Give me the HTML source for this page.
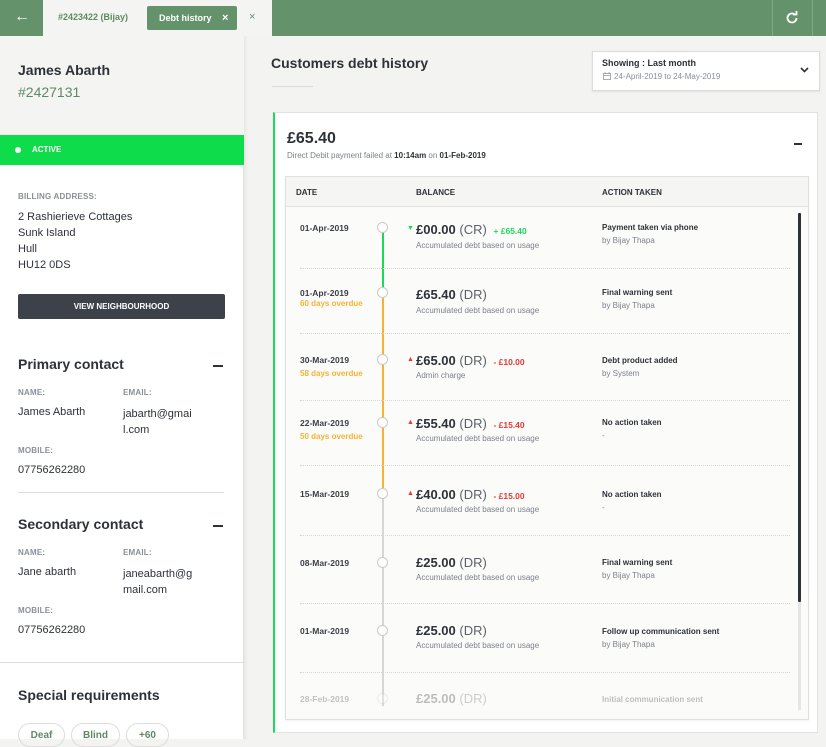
<!DOCTYPE html>
<html><head><meta charset="utf-8"><style>
*{box-sizing:border-box;margin:0;padding:0}
body{width:826px;height:739px;overflow:hidden;background:#f3f3f1;font-family:"Liberation Sans",sans-serif;color:#2d3138;position:relative}
.a{position:absolute;white-space:nowrap}
.lbl{font-size:8px;font-weight:bold;color:#8a8f98;letter-spacing:.2px}
.v{font-size:11px;color:#2d3138}
.h{font-size:14px;font-weight:bold;color:#2d3138}
.date{font-size:8.5px;font-weight:bold;color:#3a3e45}
.od{font-size:8px;color:#f5b335;font-weight:bold}
.amt{font-size:13px;font-weight:bold;color:#2d3138}
.amt span{font-weight:normal;color:#5c6169}
.sub{font-size:8px;color:#7c818a}
.act{font-size:8px;font-weight:bold;color:#2d3138}
.by{font-size:8px;color:#7c818a}
.dot{position:absolute;left:377px;width:11px;height:11px;border-radius:50%;border:1px solid #c9c9c9;background:#fff}
.div{position:absolute;left:300px;width:490px;border-top:1px dotted #d6d6d6}
.up{color:#e53935;font-size:7px}
.red{color:#e53935;font-size:8.5px;font-weight:bold}
</style></head><body>
<!-- top bar -->
<div class="a" style="left:0;top:0;width:826px;height:36px;background:#64926a"></div>
<div class="a" style="left:43px;top:0;width:229px;height:36px;background:#f4f4f2"></div>
<div class="a" style="left:14px;top:8px;color:#fff;font-size:16px">&#8592;</div>
<div class="a" style="left:58px;top:12px;font-size:9px;font-weight:bold;color:#5e8a63">#2423422 (Bijay)</div>
<div class="a" style="left:147px;top:6px;width:90px;height:24px;background:#64926a;border-radius:2px;color:#fff;font-size:9px;font-weight:bold;padding:6px 0 0 12px">Debt history <span style="margin-left:8px;font-size:11px">&#215;</span></div>
<div class="a" style="left:249px;top:11px;font-size:11px;color:#64926a">&#215;</div>
<div class="a" style="left:772px;top:0;width:1px;height:36px;background:#82a886"></div>
<div class="a" style="left:812px;top:0;width:1px;height:36px;background:#82a886"></div>
<svg class="a" style="left:785px;top:11px" width="14" height="14" viewBox="0 0 14 14"><path d="M11.5 7a4.5 4.5 0 1 1-1.4-3.3" fill="none" stroke="#fff" stroke-width="1.8"/><path d="M8 2.5h3.5V-1" fill="none" stroke="#fff" stroke-width="1.8" transform="translate(0,1)"/></svg>
<!-- sidebar -->
<div class="a" style="left:0;top:36px;width:244px;height:703px;background:#fff;border-right:1px solid #e2e2e0"></div>
<div class="a" style="left:0;top:36px;width:244px;height:99px;background:#f4f4f2"></div>
<div class="a" style="left:244px;top:36px;width:4px;height:703px;background:linear-gradient(90deg,#e6e6e4,#f3f3f1)"></div>
<div class="a" style="left:18px;top:62px;font-size:14px;font-weight:bold">James Abarth</div>
<div class="a" style="left:18px;top:84px;font-size:14px;color:#5e8a63">#2427131</div>
<div class="a" style="left:0;top:135px;width:244px;height:30px;background:#0fdc4b"></div>
<div class="a" style="left:15px;top:147px;width:6px;height:6px;border-radius:50%;background:#fff"></div>
<div class="a" style="left:32px;top:145px;font-size:8px;font-weight:bold;color:#fff">ACTIVE</div>
<div class="a lbl" style="left:18px;top:192px">BILLING ADDRESS:</div>
<div class="a v" style="left:18px;top:209px;line-height:16px">2 Rashierieve Cottages<br>Sunk Island<br>Hull<br>HU12 0DS</div>
<div class="a" style="left:18px;top:294px;width:207px;height:25px;background:#3c414a;border-radius:2px;color:#fff;font-size:8px;font-weight:bold;text-align:center;line-height:25px">VIEW NEIGHBOURHOOD</div>
<div class="a h" style="left:18px;top:356px">Primary contact</div>
<div class="a" style="left:213px;top:365px;width:10px;height:1.5px;background:#2d3138"></div>
<div class="a lbl" style="left:18px;top:388px">NAME:</div>
<div class="a lbl" style="left:123px;top:388px">EMAIL:</div>
<div class="a v" style="left:18px;top:406px">James Abarth</div>
<div class="a v" style="left:123px;top:406px;line-height:16px">jabarth@gmai<br>l.com</div>
<div class="a lbl" style="left:18px;top:446px">MOBILE:</div>
<div class="a v" style="left:18px;top:464px">07756262280</div>
<div class="a" style="left:18px;top:492px;width:206px;height:1px;background:#ddd"></div>
<div class="a h" style="left:18px;top:516px">Secondary contact</div>
<div class="a" style="left:213px;top:525px;width:10px;height:1.5px;background:#2d3138"></div>
<div class="a lbl" style="left:18px;top:548px">NAME:</div>
<div class="a lbl" style="left:123px;top:548px">EMAIL:</div>
<div class="a v" style="left:18px;top:566px">Jane abarth</div>
<div class="a v" style="left:123px;top:566px;line-height:16px">janeabarth@g<br>mail.com</div>
<div class="a lbl" style="left:18px;top:606px">MOBILE:</div>
<div class="a v" style="left:18px;top:624px">07756262280</div>
<div class="a" style="left:0;top:662px;width:244px;height:1px;background:#ddd"></div>
<div class="a h" style="left:18px;top:687px">Special requirements</div>
<div class="a" style="left:18px;top:723px;width:47px;height:24px;border:1px solid #ddd;border-radius:12px;font-size:10px;font-weight:bold;color:#5e8a63;text-align:center;padding-top:6px">Deaf</div>
<div class="a" style="left:71px;top:723px;width:49px;height:24px;border:1px solid #ddd;border-radius:12px;font-size:10px;font-weight:bold;color:#5e8a63;text-align:center;padding-top:6px">Blind</div>
<div class="a" style="left:126px;top:723px;width:43px;height:24px;border:1px solid #ddd;border-radius:12px;font-size:10px;font-weight:bold;color:#5e8a63;text-align:center;padding-top:6px">+60</div>
<!-- main -->
<div class="a" style="left:271px;top:55px;font-size:14px;font-weight:bold">Customers debt history</div>
<div class="a" style="left:272px;top:86px;width:41px;height:1px;background:#d8d8d8"></div>
<div class="a" style="left:592px;top:51px;width:228px;height:40px;background:#fff;border:1px solid #dcdcdc;box-shadow:0 1px 2px rgba(0,0,0,.08)"></div>
<div class="a" style="left:602px;top:58px;font-size:9px;font-weight:bold">Showing : Last month</div>
<svg class="a" style="left:603px;top:72px" width="8" height="8" viewBox="0 0 8 8"><rect x=".5" y="1.5" width="7" height="6" fill="none" stroke="#999" stroke-width=".8"/><path d="M2 0v2M6 0v2M.5 3.5h7" stroke="#999" stroke-width=".8"/></svg>
<div class="a" style="left:614px;top:72px;font-size:8px;color:#8a8f98">24-April-2019 to 24-May-2019</div>
<svg class="a" style="left:800px;top:67px" width="9" height="6" viewBox="0 0 9 6"><path d="M1 1l3.5 3.5L8 1" fill="none" stroke="#2d3138" stroke-width="1.6"/></svg>
<!-- card -->
<div class="a" style="left:273px;top:112px;width:545px;height:621px;background:#fff;border:1px solid #e2e2e2;border-left:2px solid #1ed85a"></div>
<div class="a" style="left:287px;top:130px;font-size:16px;font-weight:bold">£65.40</div>
<div class="a" style="left:287px;top:151px;font-size:8px;color:#7c818a">Direct Debit payment failed at <b style="color:#2d3138">10:14am</b> on <b style="color:#2d3138">01-Feb-2019</b></div>
<div class="a" style="left:794px;top:143px;width:8px;height:2px;background:#2d3138"></div>
<div class="a" style="left:285px;top:176px;width:524px;height:544px;background:#fbfbfa;border:1px solid #e0e0e0;box-shadow:0 1px 2px rgba(0,0,0,.06)"></div>
<div class="a" style="left:286px;top:177px;width:522px;height:30px;background:#f5f5f3;border-bottom:1px solid #e2e2e2"></div>
<div class="a" style="left:296px;top:188px;font-size:8px;font-weight:bold">DATE</div>
<div class="a" style="left:416px;top:188px;font-size:8px;font-weight:bold">BALANCE</div>
<div class="a" style="left:602px;top:188px;font-size:8px;font-weight:bold">ACTION TAKEN</div>
<!-- scrollbar -->
<div class="a" style="left:798px;top:213px;width:3px;height:497px;background:#e6e6e6"></div>
<div class="a" style="left:798px;top:213px;width:3px;height:389px;background:#2d3138;border-radius:1px"></div>
<!-- timeline -->
<div class="a" style="left:382px;top:232px;width:2px;height:64px;background:#1ed85a"></div>
<div class="a" style="left:382px;top:296px;width:2px;height:198px;background:#f5b335"></div>
<div class="a" style="left:382px;top:494px;width:2px;height:220px;background:#d6d6d6"></div>
<div class="div" style="top:268px"></div><div class="div" style="top:333px"></div><div class="div" style="top:400px"></div><div class="div" style="top:465px"></div><div class="div" style="top:535px"></div><div class="div" style="top:603px"></div><div class="div" style="top:672px"></div>
<!-- rows -->
<div class="dot" style="top:222px"></div>
<div class="a date" style="left:300px;top:223px">01-Apr-2019</div>
<div class="a" style="left:407px;top:225px;font-size:7px;color:#1ed85a">&#9660;</div>
<div class="a amt" style="left:416px;top:222px">£00.00 <span>(CR)</span> <b style="color:#1ed85a;font-size:8.5px;margin-left:3px">+ £65.40</b></div>
<div class="a sub" style="left:416px;top:241px">Accumulated debt based on usage</div>
<div class="a act" style="left:602px;top:223px">Payment taken via phone</div>
<div class="a by" style="left:602px;top:236px">by Bijay Thapa</div>

<div class="dot" style="top:287px"></div>
<div class="a date" style="left:300px;top:288px">01-Apr-2019</div>
<div class="a od" style="left:300px;top:299px">60 days overdue</div>
<div class="a amt" style="left:416px;top:287px">£65.40 <span>(DR)</span></div>
<div class="a sub" style="left:416px;top:306px">Accumulated debt based on usage</div>
<div class="a act" style="left:602px;top:288px">Final warning sent</div>
<div class="a by" style="left:602px;top:301px">by Bijay Thapa</div>

<div class="dot" style="top:354px"></div>
<div class="a date" style="left:300px;top:355px">30-Mar-2019</div>
<div class="a od" style="left:300px;top:369px">58 days overdue</div>
<div class="a up" style="left:407px;top:356px">&#9650;</div>
<div class="a amt" style="left:416px;top:353px">£65.00 <span>(DR)</span> <b class="red" style="margin-left:3px">- £10.00</b></div>
<div class="a sub" style="left:416px;top:371px">Admin charge</div>
<div class="a act" style="left:602px;top:356px">Debt product added</div>
<div class="a by" style="left:602px;top:369px">by System</div>

<div class="dot" style="top:417px"></div>
<div class="a date" style="left:300px;top:418px">22-Mar-2019</div>
<div class="a od" style="left:300px;top:432px">50 days overdue</div>
<div class="a up" style="left:407px;top:419px">&#9650;</div>
<div class="a amt" style="left:416px;top:416px">£55.40 <span>(DR)</span> <b class="red" style="margin-left:3px">- £15.40</b></div>
<div class="a sub" style="left:416px;top:434px">Accumulated debt based on usage</div>
<div class="a act" style="left:602px;top:418px">No action taken</div>
<div class="a by" style="left:602px;top:431px">-</div>

<div class="dot" style="top:488px"></div>
<div class="a date" style="left:300px;top:489px">15-Mar-2019</div>
<div class="a up" style="left:407px;top:490px">&#9650;</div>
<div class="a amt" style="left:416px;top:487px">£40.00 <span>(DR)</span> <b class="red" style="margin-left:3px">- £15.00</b></div>
<div class="a sub" style="left:416px;top:505px">Accumulated debt based on usage</div>
<div class="a act" style="left:602px;top:490px">No action taken</div>
<div class="a by" style="left:602px;top:503px">-</div>

<div class="dot" style="top:557px"></div>
<div class="a date" style="left:300px;top:558px">08-Mar-2019</div>
<div class="a amt" style="left:416px;top:555px">£25.00 <span>(DR)</span></div>
<div class="a sub" style="left:416px;top:573px">Accumulated debt based on usage</div>
<div class="a act" style="left:602px;top:558px">Final warning sent</div>
<div class="a by" style="left:602px;top:571px">by Bijay Thapa</div>

<div class="dot" style="top:625px"></div>
<div class="a date" style="left:300px;top:626px">01-Mar-2019</div>
<div class="a amt" style="left:416px;top:623px">£25.00 <span>(DR)</span></div>
<div class="a sub" style="left:416px;top:641px">Accumulated debt based on usage</div>
<div class="a act" style="left:602px;top:627px">Follow up communication sent</div>
<div class="a by" style="left:602px;top:640px">by Bijay Thapa</div>

<div style="opacity:.3">
<div class="dot" style="top:693px"></div>
<div class="a date" style="left:300px;top:694px">28-Feb-2019</div>
<div class="a amt" style="left:416px;top:691px">£25.00 <span>(DR)</span></div>
<div class="a act" style="left:602px;top:695px">Initial communication sent</div>
</div>
<div class="a" style="left:286px;top:706px;width:510px;height:13px;background:#fbfbfa"></div>
</body></html>
